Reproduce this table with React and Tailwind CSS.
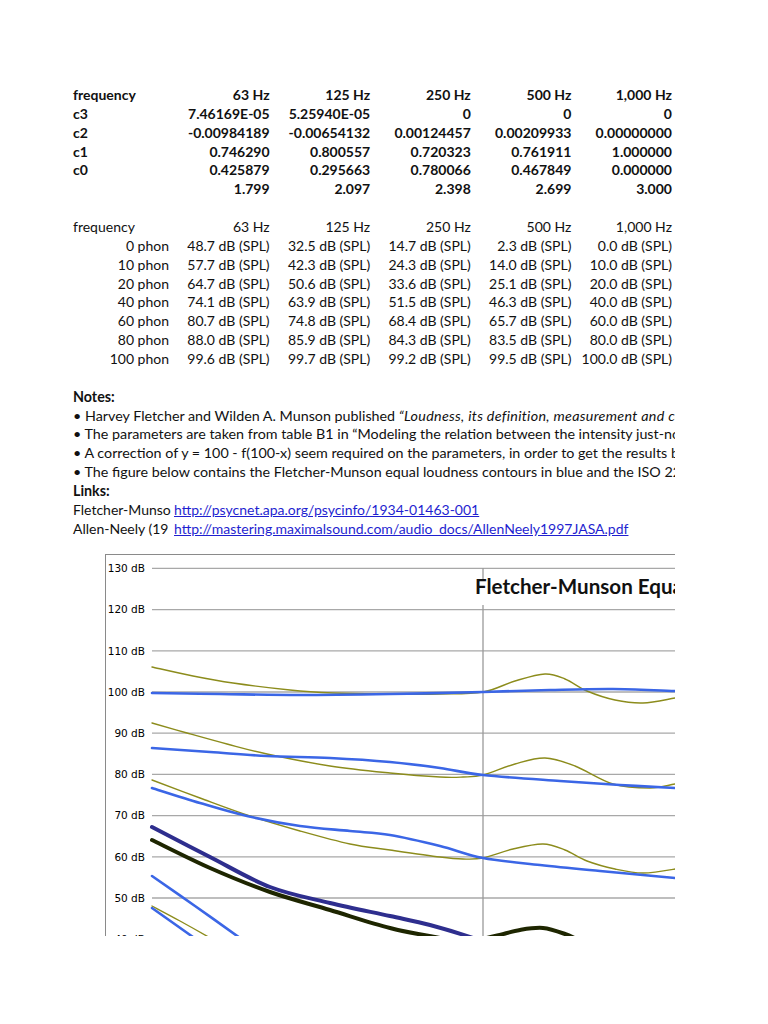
import React from "react";

const font = { fontFamily: "Lato, 'Open Sans', sans-serif" };

const coeffRows = [
  ["c3", "7.46169E-05", "5.25940E-05", "0", "0", "0"],
  ["c2", "-0.00984189", "-0.00654132", "0.00124457", "0.00209933", "0.00000000"],
  ["c1", "0.746290", "0.800557", "0.720323", "0.761911", "1.000000"],
  ["c0", "0.425879", "0.295663", "0.780066", "0.467849", "0.000000"],
  ["", "1.799", "2.097", "2.398", "2.699", "3.000"],
];

const phonRows = [
  ["0 phon", "48.7", "32.5", "14.7", "2.3", "0.0"],
  ["10 phon", "57.7", "42.3", "24.3", "14.0", "10.0"],
  ["20 phon", "64.7", "50.6", "33.6", "25.1", "20.0"],
  ["40 phon", "74.1", "63.9", "51.5", "46.3", "40.0"],
  ["60 phon", "80.7", "74.8", "68.4", "65.7", "60.0"],
  ["80 phon", "88.0", "85.9", "84.3", "83.5", "80.0"],
  ["100 phon", "99.6", "99.7", "99.2", "99.5", "100.0"],
];

const freqs = ["63 Hz", "125 Hz", "250 Hz", "500 Hz", "1,000 Hz"];

// catmull-rom -> cubic bezier
const toPath = (pts) => {
  let d = `M${pts[0][0]},${pts[0][1]}`;
  for (let i = 0; i < pts.length - 1; i++) {
    const p0 = pts[i - 1] || pts[i];
    const p1 = pts[i];
    const p2 = pts[i + 1];
    const p3 = pts[i + 2] || p2;
    const c1x = p1[0] + (p2[0] - p0[0]) / 6;
    const c1y = p1[1] + (p2[1] - p0[1]) / 6;
    const c2x = p2[0] - (p3[0] - p1[0]) / 6;
    const c2y = p2[1] - (p3[1] - p1[1]) / 6;
    d += ` C${c1x},${c1y} ${c2x},${c2y} ${p2[0]},${p2[1]}`;
  }
  return d;
};

const curves = [
  { c: "#8c8c1c", w: 1.4, p: [[152,666],[193,675],[233,682],[290,689],[333,692],[380,693],[440,693],[483,691],[515,680],[545,673],[565,678],[587,690],[615,699],[643,702],[675,697],[700,692]] },
  { c: "#3b66e6", w: 2.6, p: [[152,692],[220,693],[300,694],[390,693],[483,691],[550,689],[613,688],[675,690],[700,690]] },
  { c: "#8c8c1c", w: 1.4, p: [[152,722],[187,732],[227,743],[267,753],[330,765],[390,772],[440,776],[463,776],[483,774],[515,763],[545,757],[575,765],[613,783],[650,787],[675,783],[700,778]] },
  { c: "#3b66e6", w: 2.6, p: [[152,747],[210,751],[267,755],[330,757],[390,761],[440,767],[483,774],[560,780],[620,784],[675,787],[700,788]] },
  { c: "#8c8c1c", w: 1.4, p: [[152,779],[200,797],[250,815],[300,830],[350,843],[390,849],[440,856],[463,858],[483,857],[513,848],[543,843],[565,849],[587,860],[615,868],[643,872],[675,868],[700,862]] },
  { c: "#3b66e6", w: 2.6, p: [[152,787],[200,802],[247,815],[300,825],[350,830],[390,834],[440,845],[483,857],[540,864],[600,870],[675,877],[700,879]] },
  { c: "#2e2e8e", w: 4, p: [[152,826],[210,856],[270,886],[330,902],[390,915],[430,924],[473,937],[480,941]] },
  { c: "#1e2600", w: 4, p: [[152,839],[210,867],[270,891],[330,909],[390,927],[440,937],[465,941],[495,935],[520,929],[543,927],[565,933],[585,942]] },
  { c: "#3b66e6", w: 2.6, p: [[152,875],[195,905],[240,937],[250,944]] },
  { c: "#8c8c1c", w: 1.4, p: [[152,905],[180,920],[212,938],[220,943]] },
  { c: "#3b66e6", w: 2.6, p: [[152,907],[193,936],[200,941]] },
];

const grid = [130, 120, 110, 100, 90, 80, 70, 60, 50, 40];
const yOf = (db) => 691 - (db - 100) * 4.12;

const Cell = ({ children, className = "" }) => (
  <div className={"pr-[3px] text-right overflow-hidden " + className}>{children}</div>
);

const Chart = () => (
  <div className="ml-[35px] mt-[15px] h-[382px] w-[640px] border-l border-t border-[#8a8a8a] overflow-hidden">
    <svg width="640" height="382">
      <g transform="translate(-106,-554)">
        {grid.map((db) => (
          <g key={db}>
            <line x1="152" x2="760" y1={yOf(db)} y2={yOf(db)} stroke="#a8a8a8" strokeWidth="1.3" />
            <text
              x="145"
              y={yOf(db) + 3.8}
              textAnchor="end"
              fontSize="10.5"
              fill="#000"
              style={{ fontFamily: "'DejaVu Sans', sans-serif" }}
            >
              {db} dB
            </text>
          </g>
        ))}
        <line x1="483" x2="483" y1="567" y2="940" stroke="#9a9a9a" strokeWidth="1.3" />
        {curves.map((cv, i) => (
          <path key={i} d={toPath(cv.p)} fill="none" stroke={cv.c} strokeWidth={cv.w} strokeLinecap="round" />
        ))}
        <rect x="470" y="578" width="300" height="26" fill="#fff" />
        <text x="475" y="593" fontSize="20.6" fontWeight="700" fill="#111" style={font}>
          Fletcher-Munson Equal Loudness Contours
        </text>
      </g>
    </svg>
  </div>
);

export default function App() {
  return (
    <div className="w-[768px] h-[1024px] bg-white overflow-hidden text-[#111]" style={font}>
      <div className="ml-[70px] w-[605px] pt-[86px] overflow-hidden text-[14px]">
        <div className="font-bold">
          <div className="grid grid-cols-[102px_repeat(5,100.6px)] h-[18.86px] leading-[18.86px] whitespace-nowrap">
            <div className="pl-[3px]">frequency</div>
            {freqs.map((f) => (
              <Cell key={f}>{f}</Cell>
            ))}
          </div>
          {coeffRows.map((r, i) => (
            <div key={i} className="grid grid-cols-[102px_repeat(5,100.6px)] h-[18.86px] leading-[18.86px] whitespace-nowrap">
              <div className="pl-[3px]">{r[0]}</div>
              {r.slice(1).map((v, j) => (
                <Cell key={j}>{v}</Cell>
              ))}
            </div>
          ))}
        </div>
        <div className="h-[18.86px]" />
        <div className="grid grid-cols-[102px_repeat(5,100.6px)] h-[18.86px] leading-[18.86px] whitespace-nowrap">
          <div className="pl-[3px]">frequency</div>
          {freqs.map((f) => (
            <Cell key={f}>{f}</Cell>
          ))}
        </div>
        {phonRows.map((r, i) => (
          <div key={i} className="grid grid-cols-[102px_repeat(5,100.6px)] h-[18.86px] leading-[18.86px] whitespace-nowrap">
            <Cell>{r[0]}</Cell>
            {r.slice(1).map((v, j) => (
              <Cell key={j}>{v} dB (SPL)</Cell>
            ))}
          </div>
        ))}
        <div className="h-[18.86px]" />
        <div className="leading-[18.86px] whitespace-nowrap pl-[3px] text-[14.3px]">
          <div className="font-bold h-[18.86px]">Notes:</div>
          <div className="h-[18.86px]">
            • Harvey Fletcher and Wilden A. Munson published{" "}
            <span className="italic tracking-[0.3px]">“Loudness, its definition, measurement and calculation”</span> in 1933
          </div>
          <div className="h-[18.86px]">
            • The parameters are taken from table B1 in “Modeling the relation between the intensity just-noticeable difference and loudness”
          </div>
          <div className="h-[18.86px]">
            • A correction of y = 100 - f(100-x) seem required on the parameters, in order to get the results back to the original
          </div>
          <div className="h-[18.86px]">
            • The figure below contains the Fletcher-Munson equal loudness contours in blue and the ISO 226:2003 contours
          </div>
          <div className="font-bold h-[18.86px]">Links:</div>
        </div>
        <div className="grid grid-cols-[102px_1fr] h-[18.86px] leading-[18.86px] whitespace-nowrap">
          <div className="pl-[3px] overflow-hidden">Fletcher-Munso</div>
          <a className="pl-[2px] text-[#1f1fd0] underline">http://psycnet.apa.org/psycinfo/1934-01463-001</a>
        </div>
        <div className="grid grid-cols-[102px_1fr] h-[18.86px] leading-[18.86px] whitespace-nowrap">
          <div className="pl-[3px] overflow-hidden">Allen-Neely (19</div>
          <a className="pl-[2px] text-[#1f1fd0] underline">http://mastering.maximalsound.com/audio_docs/AllenNeely1997JASA.pdf</a>
        </div>
        <Chart />
      </div>
    </div>
  );
}
